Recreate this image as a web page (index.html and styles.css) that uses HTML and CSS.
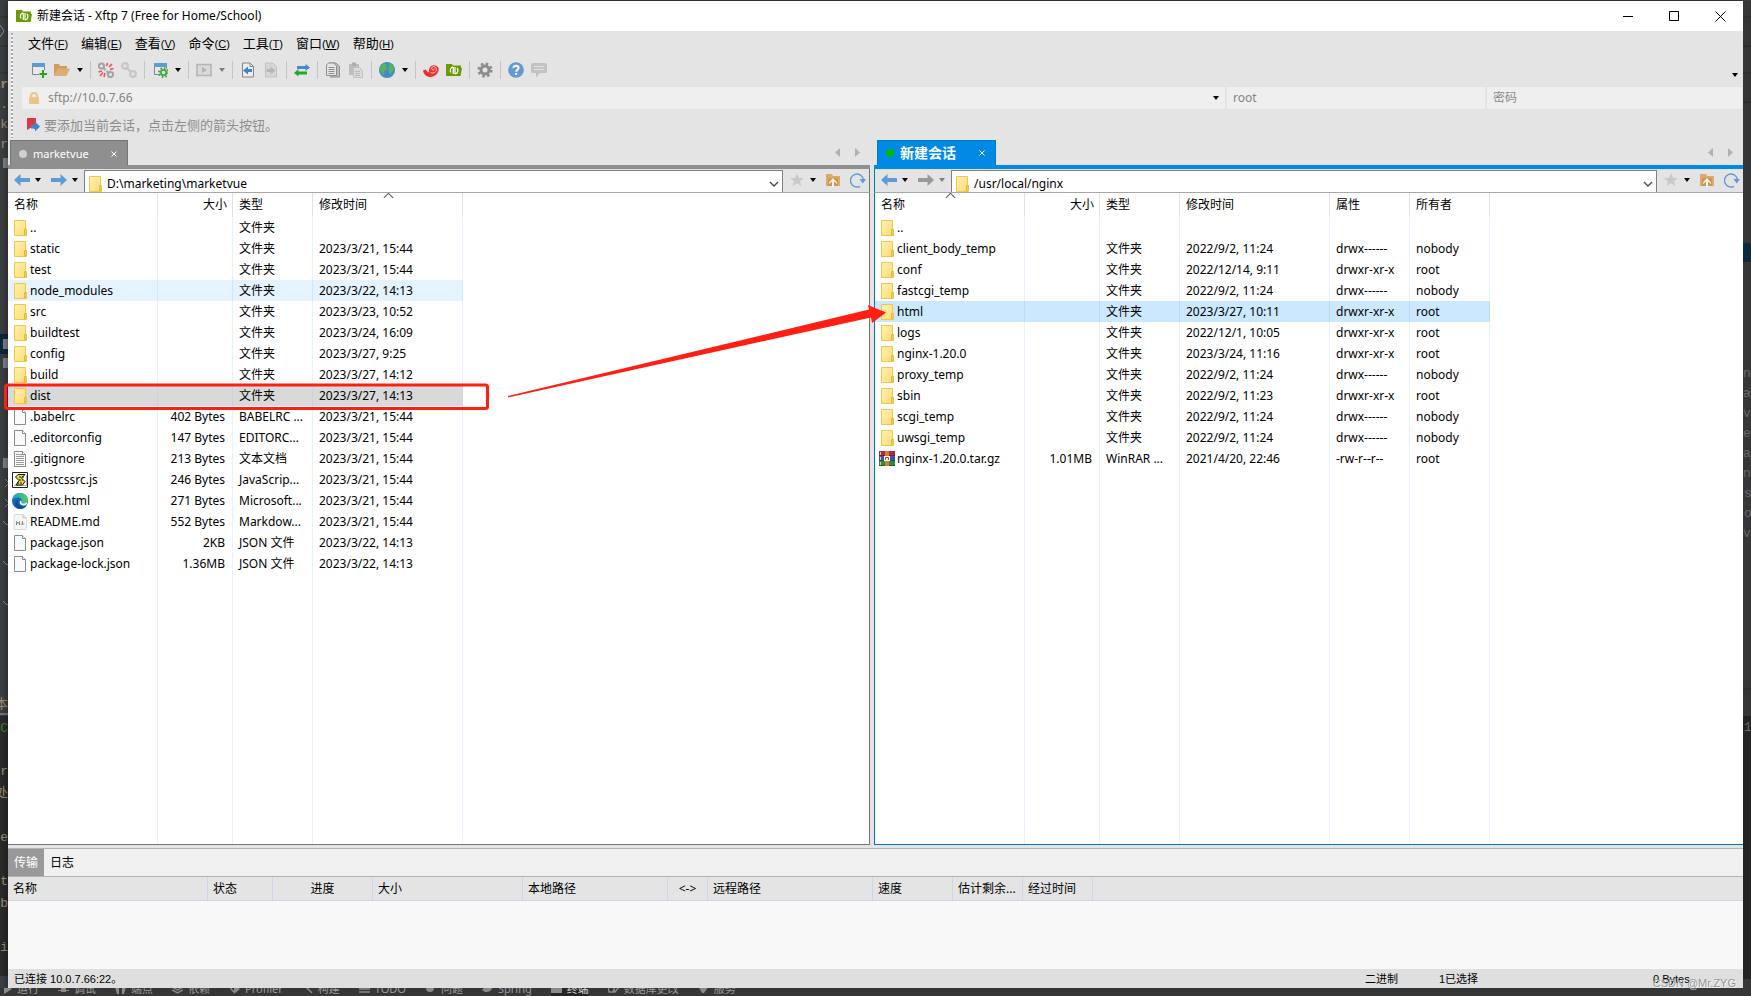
FILE: index.html
```html
<!DOCTYPE html>
<html lang="zh-CN">
<head>
<meta charset="utf-8">
<title>新建会话 - Xftp 7</title>
<link rel="stylesheet" href="styles.css">
</head>
<body>
<svg class="defs" aria-hidden="true">
  <defs>
    <linearGradient id="gf" x1="0" y1="0" x2="1" y2="1"><stop offset="0" stop-color="#fff0b4"/><stop offset="1" stop-color="#ffdb70"/></linearGradient>
    <linearGradient id="ge" x1="0" y1="0" x2="1" y2="0"><stop offset="0" stop-color="#1b9de2"/><stop offset="1" stop-color="#52d05a"/></linearGradient>
    <symbol id="folder" viewBox="0 0 16 16"><path d="M2.500.5h11v9h1v6h-12z" fill="url(#gf)" stroke="#ecc94b"/><path d="M12.500 15V9.500h1.500V15z" fill="#ffe07d" stroke="#e3b93a"/></symbol>
    <symbol id="file" viewBox="0 0 16 16"><path d="M2.500.5h8l3 3v12h-11z" fill="#fafafa" stroke="#8b8b8b"/><path d="M10.500.5v3h3" fill="#fff" stroke="#8b8b8b"/></symbol>
    <symbol id="txt" viewBox="0 0 16 16"><path d="M2.500.5h8l3 3v12h-11z" fill="#fafafa" stroke="#8b8b8b"/><path d="M10.500.5v3h3" fill="#fff" stroke="#8b8b8b"/><path d="M4 3.500h6M4 5.500h8M4 7.500h8M4 9.500h8M4 11.500h8M4 13.500h8" stroke="#9a9a9a"/></symbol>
    <symbol id="js" viewBox="0 0 16 16"><path d="M.5.5h15v15H.5z" fill="#fff" stroke="#222"/><path d="M2 13.500h12.500V3" fill="none" stroke="#aaa"/><path d="M13 2.500H6L3.500 5l3.500 3.500L4 13h6.500l2.500-3.500L9.500 6z" fill="#e8dc3a" stroke="#111"/><path d="M7 5h5M5 11h5M7 8h4" stroke="#111" stroke-dasharray="2 1"/></symbol>
    <symbol id="edge" viewBox="0 0 16 16"><circle cx="8" cy="8" r="8" fill="#1468b8"/><path d="M0 7.500C.6 3 4 0 8 0c4.500 0 8 3 8 6.500 0 2.500-2 4-4.500 4-1.500 0-2.500-.5-2-1.500C10.500 7 9.500 4.500 6 4.500 3 4.500.8 6 0 7.500z" fill="url(#ge)"/><path d="M6.200 6.500C5 8 5 11 8 12.500c2.500 1.200 5 .8 6.800-.5-1.500 2.600-4 4-6.800 4C4 16 2.500 12 3.300 9.500 3.800 8 5 7 6.200 6.500z" fill="#0d4f97"/><path d="M9.600 8.200c-.8 1.600.2 2.300 1.800 2.300 1.400 0 2.400-.2 3.900-1.200-.3 1.300-.7 2-1.200 2.600-2 .9-4.300.6-5.600-.7-1-1-1-2.500-.1-3.600z" fill="#fff"/></symbol>
    <symbol id="md" viewBox="0 0 16 16"><path d="M3 .5h8l3.500 3.500v10.500a1 1 0 0 1-1 1H3a1 1 0 0 1-1-1v-13a1 1 0 0 1 1-1z" fill="#f6f6f6" stroke="#dadada"/><path d="M11 .5V4h3.500" fill="#ddd" stroke="#ccc"/><path d="M4.500 11V7.500L6 9.500l1.500-2V11M10.500 7v3.500M9 9.300l1.500 1.700L12 9.300" fill="none" stroke="#888"/></symbol>
    <symbol id="rar" viewBox="0 0 16 16"><path d="M0 0h16v5H0z" fill="#a8264f"/><path d="M0 5h16v5H0z" fill="#4450b8"/><path d="M0 10h16v5H0z" fill="#1f9440"/><path d="M0 4.500h16M0 9.500h16M0 14.500h16" stroke="#222" stroke-opacity=".5"/><path d="M1.500 1v3M1.500 6v3M1.500 11v3" stroke="#e8d34a"/><path d="M6 0h4v15H6z" fill="#e07a28"/><path d="M5 5h6v5H5z" fill="#fff"/><path d="M6.500 9V6.500h3V9" fill="none" stroke="#c33"/></symbol>
    <symbol id="xftp" viewBox="0 0 16 16"><path d="M0 2h6l1 1.500h8V6h1l-1.500 8H0z" fill="#6a9a08"/><path d="M7 4.800A3.600 3.600 0 0 0 5 10.500M7.300 5v7M9 12a3.600 3.600 0 0 0 2-6M9 12V5" fill="none" stroke="#fff" stroke-width="1.200"/></symbol>
    <symbol id="i-new" viewBox="0 0 16 16"><path d="M1.500 1.500h12v11h-12z" fill="#e9e9e9" stroke="#858585"/><path d="M1 1h13v4H1z" fill="#5c9bd5"/><path d="M8 8h8v8H8z" fill="#e4e4e4"/><path d="M12 8v8M8.500 12h7.500" stroke="#22a722" stroke-width="2"/></symbol>
    <symbol id="i-open" viewBox="0 0 16 16"><path d="M0 14V2h5l1 2h7v3H4z" fill="#cf9d5c"/><path d="M4 6.500h12L12.500 14H0z" fill="#dcae74"/></symbol>
    <symbol id="i-unlink" viewBox="0 0 16 16"><g fill="none" stroke="#a3a3a3" stroke-width="2"><circle cx="3.500" cy="4" r="2.600"/><circle cx="12.500" cy="12.500" r="2.600"/><path d="M5.500 6l2 2M10 10.500L8.500 9"/></g><g stroke="#e8505a" stroke-width="1.500"><path d="M8.500 4l1-3M11 5l3-3M12 7.500l3.500-1M7 11l-1 4M5 10.500L2 14M4 9L.5 10"/></g></symbol>
    <symbol id="i-link" viewBox="0 0 16 16"><g fill="none" stroke="#c6c6c6" stroke-width="2.200"><circle cx="4" cy="4" r="2.800"/><circle cx="12" cy="12" r="2.800"/><path d="M5.500 5.500l5 5"/></g></symbol>
    <symbol id="i-prop" viewBox="0 0 16 16"><path d="M2.500 1.500h12v11h-12z" fill="#e9e9e9" stroke="#858585"/><path d="M2 1h13v4H2z" fill="#5c9bd5"/><circle cx="11.500" cy="10.500" r="4.800" fill="#e4e4e4"/><circle cx="11.500" cy="10.500" r="4.600" fill="none" stroke="#43ab43" stroke-width="2" stroke-dasharray="1.600 2"/><circle cx="11.500" cy="10.500" r="2.800" fill="#e9e9e9" stroke="#43ab43" stroke-width="2"/></symbol>
    <symbol id="i-play" viewBox="0 0 16 16"><path d="M1 2.500h14v11H1z" fill="#dadada" stroke="#b4b4b4" stroke-width="1.600"/><path d="M6 5v6l5-3z" fill="#b4b4b4"/></symbol>
    <symbol id="i-dl" viewBox="0 0 16 16"><path d="M2.500 1h7.500l3.500 3.500V15h-11z" fill="#ececec" stroke="#858585"/><path d="M10 1v3.500h3.500" fill="none" stroke="#858585"/><path d="M3 8.500l5-4V7h4v3H8v2.500z" fill="#3d84cf"/></symbol>
    <symbol id="i-dr" viewBox="0 0 16 16"><path d="M2.500 1h7.500l3.500 3.500V15h-11z" fill="#d6d6d6" stroke="#c2c2c2"/><path d="M12.500 8.500l-5-4V7h-4v3h4v2.500z" fill="#b7b7b7"/></symbol>
    <symbol id="i-xfer" viewBox="0 0 16 16"><path d="M16 5.500L11.500 2v2H3v3h8.500v2z" fill="#4689d2"/><path d="M0 11l4.500-4v2.500H13v3H4.500v2z" fill="#25a52a"/></symbol>
    <symbol id="i-copy" viewBox="0 0 16 16"><path d="M4 3V1h7l3.500 3.500V15H5" fill="#bdbdbd" stroke="#8d8d8d"/><path d="M1.500 3v10.500h10V4L9 1H3.500z" fill="#e6e6e6" stroke="#8d8d8d"/><path d="M3.500 5.500h6M3.500 7.500h6M3.500 9.500h6M3.500 11.500h6" stroke="#8d8d8d"/></symbol>
    <symbol id="i-paste" viewBox="0 0 16 16"><path d="M1 2h10v11H1z" fill="#bcbcbc"/><path d="M4 .5h4V4H4z" fill="#aeaeae"/><path d="M5.500 5.500h6l3 3v7h-9z" fill="#dadada" stroke="#c2c2c2"/><path d="M7 9.500h5M7 11.500h5M7 13.500h5" stroke="#bbb"/></symbol>
    <symbol id="i-globe" viewBox="0 0 16 16"><circle cx="8" cy="8" r="8" fill="#4489cc"/><path d="M1 4.500L4.500 1 8 2.500 7 5l1 2-3 2 .5 3-1.500 1.500L2.500 10 .8 8zM10 1l4 2 1.700 4L14 8l-1.500 4-2 .5L10 9 8.500 7l2-3z" fill="#53b560"/></symbol>
    <symbol id="i-shell" viewBox="0 0 16 16"><path d="M0 8.500l3-1c.5 2 2 3 3.300 2.700A5 5 0 1 1 15.800 6.500c0 4.800-3.700 8.500-8.300 8.500C3.500 15 .5 12.500 0 8.500z" fill="#ed3030"/><path d="M7.500 10.300c3.500 2 6.500-.8 5.800-3.500C12.500 4 9 4 8.700 6.300c0 2 2.500 2.200 2.600.5" fill="none" stroke="#fbd0d0"/></symbol>
    <symbol id="i-gear" viewBox="0 0 16 16"><circle cx="8" cy="8" r="6.300" fill="none" stroke="#8c8c8c" stroke-width="2.600" stroke-dasharray="2.500 2.450"/><circle cx="8" cy="8" r="4" fill="none" stroke="#8c8c8c" stroke-width="3"/></symbol>
    <symbol id="i-help" viewBox="0 0 16 16"><circle cx="8" cy="8" r="7.800" fill="#6399d3"/><path d="M5.500 6C5.500 3 10.500 3 10.500 6c0 1.700-2.400 1.700-2.400 3.800M8.100 11v2" fill="none" stroke="#fff" stroke-width="2"/></symbol>
    <symbol id="i-chat" viewBox="0 0 16 16"><path d="M1.500 1h13a1.500 1.500 0 0 1 1.500 1.500v7a1.500 1.500 0 0 1-1.500 1.500H9l-4 4.500V11H1.500A1.500 1.500 0 0 1 0 9.500v-7A1.500 1.500 0 0 1 1.500 1z" fill="#c2c2c2"/><path d="M3 4.500h10M3 7.500h10" stroke="#e2e2e2"/></symbol>
    <symbol id="back" viewBox="0 0 16 16"><path d="M0 8l6.500-6v4H16v4H6.500v4z"/></symbol>
    <symbol id="fwd" viewBox="0 0 16 16"><path d="M16 8L9.500 2v4H0v4h9.500v4z"/></symbol>
    <symbol id="caret" viewBox="0 0 6 4"><path d="M0 0h6L3 4z" fill="currentColor"/></symbol>
    <symbol id="star" viewBox="0 0 16 16"><path d="M8 1l2 5h5l-4 3.300 1.500 5L8 11.300l-4.500 3 1.500-5L1 6h5z" fill="#c9c9c9"/></symbol>
    <symbol id="up" viewBox="0 0 16 16"><path d="M1 2h6l1 2h7v10H1z" fill="#dcaa6c"/><path d="M3 6h10v8H3z" fill="#cf9650"/><path d="M8 6L4 10.500V12l3-2.500V15h2V9.500L12 12v-1.500z" fill="#f3f3f3"/></symbol>
    <symbol id="reload" viewBox="0 0 16 16"><path d="M10 14.300A6.500 6.500 0 1 1 13.300 7" fill="none" stroke="#5c9bd5" stroke-width="1.400"/><path d="M9.500 7H16l-3.200 4.500z" fill="#5c9bd5"/></symbol>
    <symbol id="chev" viewBox="0 0 10 6"><path d="M1 1l4 4 4-4" fill="none" stroke="#444" stroke-width="1.300"/></symbol>
    <symbol id="x" viewBox="0 0 6 6"><path d="M.5.5l5 5M5.500.5l-5 5" stroke="#fff"/></symbol>
    <symbol id="tl" viewBox="0 0 5 9"><path d="M5 0v9L0 4.500z" fill="#b2b2b2"/></symbol>
    <symbol id="tr" viewBox="0 0 5 9"><path d="M0 0v9l5-4.500z" fill="#b2b2b2"/></symbol>
  </defs>
</svg>
<div class="desktop">
  <div class="strip strip-left" aria-hidden="true">
    <svg width="8" height="996">
      <path d="M0 715h8v260H0z" fill="#2b2b2b"/><path d="M0 333h8v20H0z" fill="#0d293e"/>
      <path d="M0 16h8M0 45h8M0 72h8" stroke="#2b2d2e"/><path d="M0 713h8" stroke="#777" stroke-width="2"/>
      <g fill="#7d8488"><path d="M3 157h5v10H3zM3 338h5v10H3zM3 357h5v10H3zM3 457h5v10H3z"/></g>
      <g fill="none" stroke="#8b8f91"><path d="M0 24l4 6-4 6M5 478l4 4-4 4M5 498l4 4-4 4M3 520l4 4 4-4M3 560l4 4 4-4M3 600l4 4 4-4"/></g>
      <g class="code" text-anchor="end"><text x="8" y="87" font-weight="bold">ar</text><text x="8" y="107">.</text><text x="8" y="127">k</text><text x="8" y="147">r</text><text x="8" y="707">本</text><text x="8" y="731" fill="#2a8a2a">C</text><text x="8" y="774">ur</text><text x="8" y="796">处</text><text x="8" y="840">te</text><text x="8" y="884">et</text><text x="8" y="906">b</text><text x="8" y="950">li</text></g>
    </svg>
  </div>

  <main class="window">
    <header class="titlebar">
      <svg class="ic"><use href="#xftp"/></svg>
      <h1>新建会话 - Xftp 7 (Free for Home/School)</h1>
      <div class="winbtns">
        <button aria-label="最小化"><svg width="11" height="11"><path d="M0 5.500h10" stroke="#000"/></svg></button>
        <button aria-label="最大化"><svg width="11" height="11"><path d="M.5.5h9v9h-9z" fill="none" stroke="#000"/></svg></button>
        <button aria-label="关闭"><svg width="11" height="11"><path d="M.5.5l10 10M10.500.5l-10 10" stroke="#000"/></svg></button>
      </div>
    </header>

    <div class="chrome">
      <nav class="menubar">
        <button>文件<small>(<u>F</u>)</small></button><button>编辑<small>(<u>E</u>)</small></button><button>查看<small>(<u>V</u>)</small></button><button>命令<small>(<u>C</u>)</small></button><button>工具<small>(<u>T</u>)</small></button><button>窗口<small>(<u>W</u>)</small></button><button>帮助<small>(<u>H</u>)</small></button>
      </nav>
      <div class="toolbar">
        <button aria-label="新建"><svg class="ic"><use href="#i-new"/></svg></button>
        <button aria-label="打开"><svg class="ic"><use href="#i-open"/></svg></button>
        <button aria-label="打开列表"><svg class="caret"><use href="#caret"/></svg></button>
        <i></i>
        <button aria-label="断开"><svg class="ic"><use href="#i-unlink"/></svg></button>
        <button aria-label="重新连接"><svg class="ic"><use href="#i-link"/></svg></button>
        <i></i>
        <button aria-label="属性"><svg class="ic"><use href="#i-prop"/></svg></button>
        <button aria-label="属性列表"><svg class="caret"><use href="#caret"/></svg></button>
        <i></i>
        <button aria-label="执行"><svg class="ic"><use href="#i-play"/></svg></button>
        <button aria-label="执行列表" class="off"><svg class="caret"><use href="#caret"/></svg></button>
        <i></i>
        <button aria-label="下载"><svg class="ic"><use href="#i-dl"/></svg></button>
        <button aria-label="上传"><svg class="ic"><use href="#i-dr"/></svg></button>
        <i></i>
        <button aria-label="同步"><svg class="ic"><use href="#i-xfer"/></svg></button>
        <i></i>
        <button aria-label="复制"><svg class="ic"><use href="#i-copy"/></svg></button>
        <button aria-label="粘贴"><svg class="ic"><use href="#i-paste"/></svg></button>
        <i></i>
        <button aria-label="编码"><svg class="ic"><use href="#i-globe"/></svg></button>
        <button aria-label="编码列表"><svg class="caret"><use href="#caret"/></svg></button>
        <i></i>
        <button aria-label="Xshell"><svg class="ic"><use href="#i-shell"/></svg></button>
        <button aria-label="Xftp"><svg class="ic"><use href="#xftp"/></svg></button>
        <i></i>
        <button aria-label="选项"><svg class="ic"><use href="#i-gear"/></svg></button>
        <i></i>
        <button aria-label="帮助"><svg class="ic"><use href="#i-help"/></svg></button>
        <button aria-label="反馈"><svg class="ic"><use href="#i-chat"/></svg></button>
        <button aria-label="更多" class="more"><svg class="caret"><use href="#caret"/></svg></button>
      </div>
      <div class="address">
        <div class="field host">
          <svg width="12" height="12"><path d="M1 5h10v7H1z" fill="#ecc58c"/><path d="M3 5.500V3.500a3 2.500 0 0 1 6 0v2" fill="none" stroke="#ecc58c" stroke-width="2"/></svg>
          <input aria-label="主机" value="sftp://10.0.7.66">
          <button aria-label="历史"><svg class="caret"><use href="#caret"/></svg></button>
        </div>
        <div class="field"><input aria-label="用户名" value="root"></div>
        <div class="field"><input aria-label="密码" placeholder="密码"></div>
      </div>
      <div class="tip">
        <svg width="13" height="14"><path d="M0 0h9v12L5 9l-5 3z" fill="#de3642"/><path d="M4 6.500h4V3.500L13 8.500l-5 5V10.500H4z" fill="#3f86d0"/></svg>
        <span>要添加当前会话，点击左侧的箭头按钮。</span>
      </div>
    </div>

    <div class="panes">
      <section class="pane local">
        <div class="tabs">
          <div class="tab"><span class="dot"></span><span class="name">marketvue</span><button aria-label="关闭标签"><svg width="6" height="6"><use href="#x"/></svg></button></div>
          <div class="scroll"><svg width="5" height="9"><use href="#tl"/></svg><svg width="5" height="9"><use href="#tr"/></svg></div>
        </div>
        <div class="pathbar">
          <div class="nav">
            <button aria-label="后退" class="blue"><svg class="ic"><use href="#back"/></svg></button><button aria-label="后退列表"><svg class="caret"><use href="#caret"/></svg></button>
            <button aria-label="前进" class="blue"><svg class="ic"><use href="#fwd"/></svg></button><button aria-label="前进列表"><svg class="caret"><use href="#caret"/></svg></button>
          </div>
          <div class="path"><svg class="ic"><use href="#folder"/></svg><input aria-label="本地路径" value="D:\marketing\marketvue"><svg width="10" height="6"><use href="#chev"/></svg></div>
          <div class="acts"><button aria-label="收藏"><svg class="ic"><use href="#star"/></svg></button><button aria-label="收藏列表"><svg class="caret"><use href="#caret"/></svg></button><button aria-label="上级"><svg class="ic"><use href="#up"/></svg></button><button aria-label="刷新"><svg class="ic"><use href="#reload"/></svg></button></div>
        </div>
        <div class="listing">
          <table class="w4">
            <colgroup><col class="c150"><col class="c75"><col class="c80"><col class="c150"></colgroup>
            <thead><tr><th>名称</th><th class="num">大小</th><th>类型</th><th class="sorted">修改时间</th></tr></thead>
            <tbody>
              <tr><td><svg class="ic"><use href="#folder"/></svg>..</td><td></td><td>文件夹</td><td></td></tr>
              <tr><td><svg class="ic"><use href="#folder"/></svg>static</td><td></td><td>文件夹</td><td>2023/3/21, 15:44</td></tr>
              <tr><td><svg class="ic"><use href="#folder"/></svg>test</td><td></td><td>文件夹</td><td>2023/3/21, 15:44</td></tr>
              <tr class="hover"><td><svg class="ic"><use href="#folder"/></svg>node_modules</td><td></td><td>文件夹</td><td>2023/3/22, 14:13</td></tr>
              <tr><td><svg class="ic"><use href="#folder"/></svg>src</td><td></td><td>文件夹</td><td>2023/3/23, 10:52</td></tr>
              <tr><td><svg class="ic"><use href="#folder"/></svg>buildtest</td><td></td><td>文件夹</td><td>2023/3/24, 16:09</td></tr>
              <tr><td><svg class="ic"><use href="#folder"/></svg>config</td><td></td><td>文件夹</td><td>2023/3/27, 9:25</td></tr>
              <tr><td><svg class="ic"><use href="#folder"/></svg>build</td><td></td><td>文件夹</td><td>2023/3/27, 14:12</td></tr>
              <tr class="inactive"><td><svg class="ic"><use href="#folder"/></svg>dist</td><td></td><td>文件夹</td><td>2023/3/27, 14:13</td></tr>
              <tr><td><svg class="ic"><use href="#file"/></svg>.babelrc</td><td class="num">402 Bytes</td><td>BABELRC ...</td><td>2023/3/21, 15:44</td></tr>
              <tr><td><svg class="ic"><use href="#file"/></svg>.editorconfig</td><td class="num">147 Bytes</td><td>EDITORC...</td><td>2023/3/21, 15:44</td></tr>
              <tr><td><svg class="ic"><use href="#txt"/></svg>.gitignore</td><td class="num">213 Bytes</td><td>文本文档</td><td>2023/3/21, 15:44</td></tr>
              <tr><td><svg class="ic"><use href="#js"/></svg>.postcssrc.js</td><td class="num">246 Bytes</td><td>JavaScrip...</td><td>2023/3/21, 15:44</td></tr>
              <tr><td><svg class="ic"><use href="#edge"/></svg>index.html</td><td class="num">271 Bytes</td><td>Microsoft...</td><td>2023/3/21, 15:44</td></tr>
              <tr><td><svg class="ic"><use href="#md"/></svg>README.md</td><td class="num">552 Bytes</td><td>Markdow...</td><td>2023/3/21, 15:44</td></tr>
              <tr><td><svg class="ic"><use href="#file"/></svg>package.json</td><td class="num">2KB</td><td>JSON 文件</td><td>2023/3/22, 14:13</td></tr>
              <tr><td><svg class="ic"><use href="#file"/></svg>package-lock.json</td><td class="num">1.36MB</td><td>JSON 文件</td><td>2023/3/22, 14:13</td></tr>
              <tr class="rest"><td></td><td></td><td></td><td></td></tr>
            </tbody>
          </table>
        </div>
      </section>

      <section class="pane remote">
        <div class="tabs">
          <div class="tab"><span class="dot"></span><span class="name">新建会话</span><button aria-label="关闭标签"><svg width="6" height="6"><use href="#x"/></svg></button></div>
          <div class="scroll"><svg width="5" height="9"><use href="#tl"/></svg><svg width="5" height="9"><use href="#tr"/></svg></div>
        </div>
        <div class="pathbar">
          <div class="nav">
            <button aria-label="后退" class="blue"><svg class="ic"><use href="#back"/></svg></button><button aria-label="后退列表"><svg class="caret"><use href="#caret"/></svg></button>
            <button aria-label="前进" class="off"><svg class="ic"><use href="#fwd"/></svg></button><button aria-label="前进列表" class="off"><svg class="caret"><use href="#caret"/></svg></button>
          </div>
          <div class="path"><svg class="ic"><use href="#folder"/></svg><input aria-label="远程路径" value="/usr/local/nginx"><svg width="10" height="6"><use href="#chev"/></svg></div>
          <div class="acts"><button aria-label="收藏"><svg class="ic"><use href="#star"/></svg></button><button aria-label="收藏列表"><svg class="caret"><use href="#caret"/></svg></button><button aria-label="上级"><svg class="ic"><use href="#up"/></svg></button><button aria-label="刷新"><svg class="ic"><use href="#reload"/></svg></button></div>
        </div>
        <div class="listing">
          <table class="w6">
            <colgroup><col class="c150"><col class="c75"><col class="c80"><col class="c150"><col class="c80"><col class="c80"></colgroup>
            <thead><tr><th class="sorted">名称</th><th class="num">大小</th><th>类型</th><th>修改时间</th><th>属性</th><th>所有者</th></tr></thead>
            <tbody>
              <tr><td><svg class="ic"><use href="#folder"/></svg>..</td><td></td><td></td><td></td><td></td><td></td></tr>
              <tr><td><svg class="ic"><use href="#folder"/></svg>client_body_temp</td><td></td><td>文件夹</td><td>2022/9/2, 11:24</td><td>drwx------</td><td>nobody</td></tr>
              <tr><td><svg class="ic"><use href="#folder"/></svg>conf</td><td></td><td>文件夹</td><td>2022/12/14, 9:11</td><td>drwxr-xr-x</td><td>root</td></tr>
              <tr><td><svg class="ic"><use href="#folder"/></svg>fastcgi_temp</td><td></td><td>文件夹</td><td>2022/9/2, 11:24</td><td>drwx------</td><td>nobody</td></tr>
              <tr class="selected"><td><svg class="ic"><use href="#folder"/></svg>html</td><td></td><td>文件夹</td><td>2023/3/27, 10:11</td><td>drwxr-xr-x</td><td>root</td></tr>
              <tr><td><svg class="ic"><use href="#folder"/></svg>logs</td><td></td><td>文件夹</td><td>2022/12/1, 10:05</td><td>drwxr-xr-x</td><td>root</td></tr>
              <tr><td><svg class="ic"><use href="#folder"/></svg>nginx-1.20.0</td><td></td><td>文件夹</td><td>2023/3/24, 11:16</td><td>drwxr-xr-x</td><td>root</td></tr>
              <tr><td><svg class="ic"><use href="#folder"/></svg>proxy_temp</td><td></td><td>文件夹</td><td>2022/9/2, 11:24</td><td>drwx------</td><td>nobody</td></tr>
              <tr><td><svg class="ic"><use href="#folder"/></svg>sbin</td><td></td><td>文件夹</td><td>2022/9/2, 11:23</td><td>drwxr-xr-x</td><td>root</td></tr>
              <tr><td><svg class="ic"><use href="#folder"/></svg>scgi_temp</td><td></td><td>文件夹</td><td>2022/9/2, 11:24</td><td>drwx------</td><td>nobody</td></tr>
              <tr><td><svg class="ic"><use href="#folder"/></svg>uwsgi_temp</td><td></td><td>文件夹</td><td>2022/9/2, 11:24</td><td>drwx------</td><td>nobody</td></tr>
              <tr><td><svg class="ic"><use href="#rar"/></svg>nginx-1.20.0.tar.gz</td><td class="num">1.01MB</td><td>WinRAR ...</td><td>2021/4/20, 22:46</td><td>-rw-r--r--</td><td>root</td></tr>
              <tr class="rest"><td></td><td></td><td></td><td></td><td></td><td></td></tr>
            </tbody>
          </table>
        </div>
      </section>
    </div>

    <section class="transfer">
      <div class="logtabs"><button class="on">传输</button><button>日志</button></div>
      <table class="queue">
        <colgroup><col class="q200"><col class="q65"><col class="q100"><col class="q150"><col class="q145"><col class="q40"><col class="q165"><col class="q80"><col class="q70"><col class="q70"></colgroup>
        <thead><tr><th>名称</th><th>状态</th><th class="mid">进度</th><th>大小</th><th>本地路径</th><th class="mid">&lt;-&gt;</th><th>远程路径</th><th>速度</th><th>估计剩余...</th><th>经过时间</th></tr></thead>
      </table>
    </section>

    <footer class="status">
      <span class="conn">已连接 10.0.7.66:22。</span><span class="mode">二进制</span><span class="count">1已选择</span><span class="bytes">0 Bytes</span>
    </footer>
  </main>

  <div class="strip strip-right" aria-hidden="true">
    <svg width="8" height="996">
      <path d="M0 715h8v263H0z" fill="#232425"/><path d="M0 242h8v19H0z" fill="#0d293e"/><path d="M0 16h8M0 45h8M0 72h8M0 101h8M0 688h8" stroke="#232425"/>
      <g class="code dim"><text x="0" y="376">n-</text><text x="0" y="396">a</text><text x="0" y="416">v</text><text x="0" y="436">er</text><text x="0" y="456">ar</text><text x="0" y="476">n</text><text x="1" y="496">s</text><text x="1" y="516">o</text><text x="0" y="536">v</text><text x="1" y="730">1</text></g>
    </svg>
  </div>

  <div class="idebar" aria-hidden="true">
    <span><svg width="9" height="10"><path d="M1 0l8 5-8 5z"/></svg>运行</span>
    <span><svg width="11" height="10"><path d="M3 0h5v8H3zM0 3h11v1H0zM0 6h11v1H0z"/></svg>调试</span>
    <span><svg width="11" height="10"><path d="M0 3h4v7H2zM7 3h4l-2 7H7z"/></svg>端点</span>
    <span><svg width="11" height="10"><path d="M0 3l5.500 3L11 3M0 6l5.500 3L11 6" class="ln"/></svg>依赖</span>
    <span><svg width="11" height="10"><path d="M1 2q2 6 5 6" class="ln"/><path d="M5 1l6 4-6 5z"/></svg>Profiler</span>
    <span><svg width="11" height="10"><path d="M2 1l8 8" class="ln"/></svg>构建</span>
    <span><svg width="11" height="10"><path d="M0 2h11M0 5h11M0 8h11" class="ln"/></svg>TODO</span>
    <span><svg width="11" height="10"><circle cx="5" cy="4" r="4"/></svg>问题</span>
    <span><svg width="11" height="10"><path d="M0 6Q5 0 11 1 10 9 3 8z"/></svg>Spring</span>
    <span class="cur"><svg width="11" height="10"><path d="M0 0h11v9H0z"/></svg>终端</span>
    <span><svg width="11" height="10"><path d="M0 2h6v6H1zM5 6l2 2 4-5" class="ln"/></svg>数据库更改</span>
    <span><svg width="11" height="10"><path d="M0 2h11L6 9H4z"/></svg>服务</span>
  </div>

  <svg class="notes" width="1751" height="430" aria-hidden="true">
    <rect x="5.500" y="385" width="482" height="23.500" rx="2" fill="none" stroke="#fe1f12" stroke-width="3"/>
    <path d="M508 396L869 309.500 868 305 886 312.500 872 323 871 317.500 508 397.500z" fill="#fe1f12"/>
  </svg>
  <div class="watermark">CSDN @Mr.ZYG</div>
</div>
</body>
</html>
```

FILE: styles.css
```css
* { box-sizing: border-box; }
body {
  margin: 0;
  font: 12px/16px "Noto Sans", "Noto Sans CJK SC", sans-serif;
  color: #000;
  background: #3c3f41;
}
button, input {
  font: inherit;
  color: inherit;
  border: 0;
  padding: 0;
  margin: 0;
  background: none;
}
button { display: flex; align-items: center; flex: none; }
input { min-width: 0; flex: 1; outline: 0; }
svg { display: block; flex: none; }
.defs { position: absolute; width: 0; height: 0; }
.ic { width: 16px; height: 16px; }
.caret { width: 6px; height: 4px; }
.off { color: #7e7e7e; fill: #999; }
.blue { fill: #5c9bd5; }

.desktop {
  position: relative;
  display: grid;
  grid-template-columns: 8px minmax(0, 1fr) 8px;
  grid-template-rows: minmax(0, 1fr) 8px;
  height: 100vh;
  padding-top: 1px;
  overflow: hidden;
}
.strip { overflow: hidden; }
.strip-right { background: #343638; }
.code { font: 13px "Liberation Mono", "Noto Sans CJK SC", monospace; fill: #a08f78; }
.dim { fill: #66696b; }
.window {
  display: flex;
  flex-direction: column;
  min-height: 0;
  background: #e4e4e4;
  box-shadow: 0 0 8px rgba(0, 0, 0, .5);
}

.titlebar {
  display: flex;
  align-items: center;
  gap: 5px;
  height: 30px;
  padding-left: 8px;
  background: #fff;
}
.titlebar h1 { margin: 0; flex: 1; font-size: 12px; font-weight: 400; }
.winbtns { display: flex; }
.winbtns button { width: 46px; height: 30px; justify-content: center; }

.chrome { position: relative; height: 109px; padding-left: 14px; }
.chrome::before {
  content: "";
  position: absolute;
  left: 3px;
  top: 2px;
  bottom: 2px;
  width: 2px;
  background: repeating-linear-gradient(#a8a8a8 0 2px, #f4f4f4 2px 4px);
}
.menubar { display: flex; gap: 13px; height: 26px; padding: 0 0 3px 6px; font-size: 13px; }
.menubar small { font: 11px/16px "Liberation Sans", sans-serif; padding-top: 2px; }
.toolbar { display: flex; align-items: center; gap: 7px; height: 26px; padding-left: 9px; }
.toolbar i { width: 1px; height: 18px; background: #c4c4c4; }
.toolbar .more { margin: 10px 5px 0 auto; }
.address {
  display: grid;
  grid-template-columns: 1203fr 258fr 255fr;
  gap: 2px;
  margin: 4px 1px 0 0;
  color: #858585;
}
.field { display: flex; align-items: center; gap: 8px; height: 22px; padding: 0 6px; background: #efefef; }
.field input::placeholder { color: #8c8c8c; }
.host button { color: #000; }
.tip { display: flex; align-items: center; gap: 4px; height: 31px; padding-left: 5px; font-size: 13px; color: #8c8c8c; }

.panes { display: grid; grid-template-columns: 862fr 869fr; gap: 4px; flex: 1; min-height: 0; }
.pane { display: flex; flex-direction: column; min-height: 0; min-width: 0; }
.local { --tab: #8f8f8f; --edge: #757575; }
.remote { --tab: #008ae6; --edge: #0078c8; }
.tabs { display: flex; justify-content: space-between; height: 29px; border-bottom: 4px solid var(--tab); padding-left: 2px; }
.tab {
  display: flex;
  align-items: center;
  width: 118px;
  padding: 2px 10px 0 8px;
  color: #fff;
  background: var(--tab);
  border: 1px solid var(--edge);
  border-bottom: 0;
  font-size: 11px;
}
.remote .tab { margin-left: 1px; width: 119px; padding-top: 0; font-size: 14px; font-weight: 700; }
.dot { width: 8px; height: 8px; margin-right: 6px; border-radius: 50%; background: #d0d0d0; }
.remote .dot { background: #0b0; }
.name { flex: 1; }
.scroll { display: flex; gap: 15px; align-items: center; padding-right: 10px; }
.pathbar { display: flex; height: 24px; border-bottom: 1px solid #a8a8a8; padding-top: 1px; }
.remote .pathbar, .remote .listing { border-left: 1px solid var(--edge); }
.local .listing, .local .pathbar { border-right: 1px solid var(--edge); }
.nav, .acts { display: flex; align-items: center; gap: 5px; padding: 0 0 2px 6px; }
.nav { width: 76px; }
.nav button:nth-child(3) { margin-left: 5px; }
.acts { width: 86px; }
.acts button:nth-child(n+3) { margin-left: 4px; }
.path {
  display: flex;
  align-items: center;
  gap: 4px;
  flex: 1;
  min-width: 0;
  padding: 4px 3px 0 2px;
  background: #fff;
  border: 1px solid #808080;
  border-bottom: 0;
}
.listing { flex: 1; min-height: 0; background: #fff; border-bottom: 1px solid var(--edge); }

table { border-collapse: separate; border-spacing: 0; table-layout: fixed; }
.listing table { height: 100%; }
.w4 { width: 455px; }
.w6 { width: 615px; }
.c150 { width: 150px; }
.c75 { width: 75px; }
.c80 { width: 80px; }
.listing th, .listing td {
  padding: 0 6px;
  text-align: left;
  font-weight: 400;
  white-space: nowrap;
  overflow: hidden;
  border-right: 1px solid #e6f2fe;
}
.listing th { height: 24px; border-color: #e2e2e2; }
.listing td { height: 21px; }
.listing .rest td { height: auto; }
.listing td:first-child { padding-left: 4px; }
.listing td .ic { display: inline-block; vertical-align: top; margin-right: 2px; }
.listing .num { text-align: right; }
.listing td.num { padding-right: 7px; }
.listing th.num { padding-right: 5px; }
.hover td { background: #e5f3ff; border-color: #cce8ff; }
.selected td { background: #cce8ff; border-color: #bcdcf4; }
.inactive td { background: #d9d9d9; border-color: #ccd3da; }
.sorted { position: relative; }
.sorted::after {
  content: "";
  position: absolute;
  left: 50%;
  top: 1px;
  width: 6px;
  height: 6px;
  margin-left: -3px;
  border: solid #555;
  border-width: 1px 0 0 1px;
  transform: rotate(45deg);
}

.transfer {
  height: 121px;
  margin-top: 3px;
  border-top: 1px solid #b4b4b4;
  background: linear-gradient(#e4e4e4 0 51px, #ccd6e6 51px 52px, #f8f8f8 52px);
}
.logtabs { display: flex; height: 28px; background: #f0f0f0; border-bottom: 1px solid #b4b4b4; }
.logtabs button { width: 36px; justify-content: center; }
.logtabs .on { color: #fff; background: #999; }
.queue { width: 1085px; background: #e4e4e4; }
.queue th {
  height: 24px;
  padding: 0 5px;
  text-align: left;
  font-weight: 400;
  white-space: nowrap;
  border-right: 1px solid #ccd6e6;
  border-bottom: 1px solid #ccd6e6;
}
.queue .mid { text-align: center; }
.q200 { width: 200px; }
.q65 { width: 65px; }
.q100 { width: 100px; }
.q150 { width: 150px; }
.q145 { width: 145px; }
.q40 { width: 40px; }
.q165 { width: 165px; }
.q80 { width: 80px; }
.q70 { width: 70px; }

.status {
  display: flex;
  align-items: center;
  height: 19px;
  padding-left: 6px;
  background: #dfdfdf;
  font: 11px/16px "Liberation Sans", "Noto Sans CJK SC", sans-serif;
}
.conn { flex: 1; }
.mode { width: 74px; }
.count { width: 214px; }
.bytes { width: 90px; }

.idebar {
  grid-column: 1 / -1;
  display: flex;
  align-items: flex-end;
  gap: 19px;
  height: 8px;
  padding-left: 3px;
  overflow: hidden;
  background: #343638;
  color: #9a9a9a;
  fill: #8a8a8a;
  font-size: 11px;
}
.idebar span { display: flex; align-items: center; gap: 5px; height: 15px; flex: none; }
.idebar .ln { fill: none; stroke: #8a8a8a; stroke-width: 1.5; }
.idebar .cur { color: #ddd; background: #242526; }
.notes { position: absolute; left: 0; top: 0; pointer-events: none; }
.watermark {
  position: absolute;
  right: 15px;
  bottom: 5px;
  font: 11px/16px "Liberation Sans", sans-serif;
  color: rgba(140, 140, 140, .9);
  text-shadow: 1px 1px 0 rgba(255, 255, 255, .7);
}
```
